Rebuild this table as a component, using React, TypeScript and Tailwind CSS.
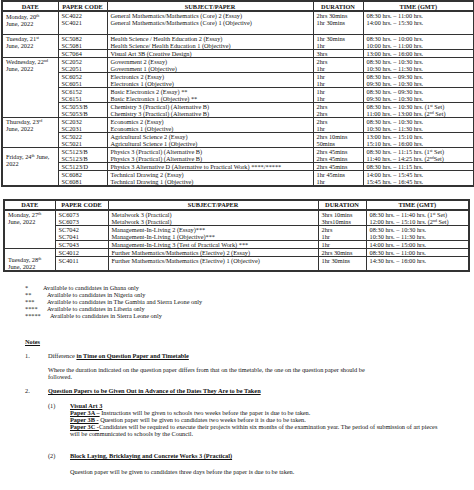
import React from 'react';

type Row = {
  date?: { lines: React.ReactNode[]; span: number; cls?: string };
  h: string;
  code: string[];
  subject: React.ReactNode[];
  dur: string[];
  time: React.ReactNode[];
};

const Sup = ({ children }: { children: React.ReactNode }) => (
  <span className="relative -top-[2px] text-[4px] leading-[0]">{children}</span>
);

const Lines = ({ items }: { items: React.ReactNode[] }) => (
  <>
    {items.map((l, i) => (
      <div key={i} className="h-[7px] whitespace-nowrap">
        {l}
      </div>
    ))}
  </>
);

const td = 'border border-[#333] align-top p-0 px-[3px]';

const firstTable: Row[] = [
  {
    date: { lines: [<>Monday, 20<Sup>th</Sup></>, 'June, 2022'], span: 1, cls: 'pt-[1px]' },
    h: 'h-[23px]',
    code: ['SC4022', 'SC4021'],
    subject: ['General Mathematics/Mathematics (Core) 2 (Essay)', 'General Mathematics/Mathematics (Core) 1 (Objective)'],
    dur: ['2hrs 30mins', '1hr 30mins'],
    time: ['08:30 hrs. – 11:00 hrs.', '14:00 hrs. – 15:30 hrs.'],
  },
  {
    date: { lines: [<>Tuesday, 21<Sup>st</Sup></>, 'June, 2022'], span: 2 },
    h: 'h-[15px]',
    code: ['SC5082', 'SC5081'],
    subject: ['Health Science / Health Education 2  (Essay)', 'Health Science/ Health Education 1 (Objective)'],
    dur: ['1hr 30mins', '1hr'],
    time: ['08:30 hrs. – 10:00 hrs.', '10:00 hrs. – 11:00 hrs.'],
  },
  {
    h: 'h-[7px]',
    code: ['SC7064'],
    subject: ['Visual Art 3B (Creative Design)'],
    dur: ['3hrs'],
    time: ['13:00 hrs. – 16:00 hrs.'],
  },
  {
    date: { lines: [<>Wednesday, 22<Sup>nd</Sup></>, 'June, 2022'], span: 4 },
    h: 'h-[14px]',
    code: ['SC2052', 'SC2051'],
    subject: ['Government 2 (Essay)', 'Government 1 (Objective)'],
    dur: ['2hrs', '1hr'],
    time: ['08:30 hrs. – 10:30 hrs.', '10:30 hrs. – 11:30 hrs.'],
  },
  {
    h: 'h-[15px]',
    code: ['SC6052', 'SC6051'],
    subject: ['Electronics 2 (Essay)', 'Electronics 1 (Objective)'],
    dur: ['1hr', '1hr'],
    time: ['08:30 hrs. – 09:30 hrs.', '09:30 hrs. – 10:30 hrs.'],
  },
  {
    h: 'h-[15px]',
    code: ['SC6152', 'SC6151'],
    subject: ['Basic Electronics 2 (Essay) **', 'Basic Electronics 1 (Objective) **'],
    dur: ['1hr', '1hr'],
    time: ['08:30 hrs. – 09:30 hrs.', '09:30 hrs. – 10:30 hrs.'],
  },
  {
    h: 'h-[14px]',
    code: ['SC5053/B', 'SC5053/B'],
    subject: ['Chemistry 3 (Practical) (Alternative B)', 'Chemistry 3 (Practical) (Alternative B)'],
    dur: ['2hrs', '2hrs'],
    time: [
      <>08:30 hrs. – 10:30 hrs. (1<Sup>st</Sup> Set)</>,
      <>11:00 hrs. – 13:00 hrs. (2<Sup>nd</Sup> Set)</>,
    ],
  },
  {
    date: { lines: [<>Thursday, 23<Sup>rd</Sup></>, 'June, 2022'], span: 2 },
    h: 'h-[15px]',
    code: ['SC2032', 'SC2031'],
    subject: ['Economics 2 (Essay)', 'Economics 1 (Objective)'],
    dur: ['2hrs', '1hr'],
    time: ['08:30 hrs. – 10:30 hrs.', '10:30 hrs. – 11:30 hrs.'],
  },
  {
    h: 'h-[15px]',
    code: ['SC5022', 'SC5021'],
    subject: ['Agricultural Science 2 (Essay)', 'Agricultural Science 1 (Objective)'],
    dur: ['2hrs 10mins', '50mins'],
    time: ['13:00 hrs. – 15:10 hrs.', '15:10 hrs. – 16:00 hrs.'],
  },
  {
    date: { lines: [<>Friday, 24<Sup>th</Sup> June,</>, '2022'], span: 3, cls: 'pt-[5px]' },
    h: 'h-[15px]',
    code: ['SC5123/B', 'SC5123/B'],
    subject: ['Physics 3 (Practical) (Alternative B)', 'Physics 3 (Practical) (Alternative B)'],
    dur: ['2hrs 45mins', '2hrs 45mins'],
    time: [
      <>08:30 hrs. – 11:15 hrs. (1<Sup>st</Sup> Set)</>,
      <>11:40 hrs. – 14:25 hrs. (2<Sup>nd</Sup>Set)</>,
    ],
  },
  {
    h: 'h-[7px]',
    code: ['SC5123/D'],
    subject: ['Physics 3 Alternative D (Alternative to Practical Work) ****/*****'],
    dur: ['2hrs 45mins'],
    time: ['08:30 hrs. – 11:15 hrs.'],
  },
  {
    h: 'h-[14px]',
    code: ['SC6082', 'SC6081'],
    subject: ['Technical Drawing 2 (Essay)', 'Technical Drawing 1 (Objective)'],
    dur: ['1hr 45mins', '1hr'],
    time: ['14:00 hrs. – 15:45 hrs.', '15:45 hrs. – 16:45 hrs.'],
  },
];

const secondTable: Row[] = [
  {
    date: { lines: [<>Monday, 27<Sup>th</Sup></>, 'June, 2022'], span: 3 },
    h: 'h-[14px]',
    code: ['SC6073', 'SC6073'],
    subject: ['Metalwork 3 (Practical)', 'Metalwork 3 (Practical)'],
    dur: ['3hrs 10mins', '3hrs10mins'],
    time: [
      <>08:30 hrs. – 11:40 hrs. (1<Sup>st</Sup> Set)</>,
      <>12:00 hrs. – 15:10 hrs. (2<Sup>nd</Sup> Set)</>,
    ],
  },
  {
    h: 'h-[14px]',
    code: ['SC7042', 'SC7041'],
    subject: ['Management-In-Living 2 (Essay)***', 'Management-In-Living 1 (Objective)***'],
    dur: ['2hrs', '1hr'],
    time: ['08:30 hrs. – 10:30 hrs.', '10:30 hrs. – 11:30 hrs.'],
  },
  {
    h: 'h-[7px]',
    code: ['SC7043'],
    subject: ['Management-In-Living 3 (Test of Practical Work) ***'],
    dur: ['1hr'],
    time: ['14:00 hrs. – 15:00 hrs.'],
  },
  {
    date: { lines: [<>Tuesday, 28<Sup>th</Sup></>, 'June, 2022'], span: 2, cls: '!align-bottom' },
    h: 'h-[7px]',
    code: ['SC4012'],
    subject: ['Further Mathematics/Mathematics (Elective) 2 (Essay)'],
    dur: ['2hrs 30mins'],
    time: ['08:30 hrs. – 11:00 hrs.'],
  },
  {
    h: 'h-[15px]',
    code: ['SC4011'],
    subject: ['Further Mathematics/Mathematics (Elective) 1 (Objective)'],
    dur: ['1hr 30mins'],
    time: ['14:30 hrs. – 16:00 hrs.'],
  },
];

const th = 'border border-[#333] border-b-2 text-center p-0';

const Header = () => (
  <tr className="h-[10px] font-bold">
    <th className={th}>DATE</th>
    <th className={th}>PAPER CODE</th>
    <th className={th}>SUBJECT/PAPER</th>
    <th className={th}>DURATION</th>
    <th className={th}>TIME (GMT)</th>
  </tr>
);

const Timetable = ({ rows, widths, cls }: { rows: Row[]; widths: string[]; cls: string }) => (
  <table className={`table-fixed border-collapse border-2 border-[#333] ${cls}`}>
    <colgroup>
      {widths.map((w, i) => (
        <col key={i} className={w} />
      ))}
    </colgroup>
    <tbody>
      <Header />
      {rows.map((r, i) => (
        <tr key={i} className={r.h}>
          {r.date && (
            <td rowSpan={r.date.span} className={`${td} ${r.date.cls ?? ''}`}>
              <Lines items={r.date.lines} />
            </td>
          )}
          <td className={td}>
            <Lines items={r.code} />
          </td>
          <td className={td}>
            <Lines items={r.subject} />
          </td>
          <td className={td}>
            <Lines items={r.dur} />
          </td>
          <td className={td}>
            <Lines items={r.time} />
          </td>
        </tr>
      ))}
    </tbody>
  </table>
);

const U = ({ children }: { children: React.ReactNode }) => (
  <span className="font-bold underline decoration-[0.7px] underline-offset-[1px]">{children}</span>
);

export default function App() {
  return (
    <div className="w-[474px] h-[490px] overflow-hidden bg-white text-[#111] font-['Liberation_Serif',serif] text-[6.3px] leading-[7px]">
      <Timetable
        rows={firstTable}
        widths={['w-[56px]', 'w-[49px]', 'w-[206px]', 'w-[50px]', 'w-[111px]']}
        cls="ml-[1px] w-[472px]"
      />

      <Timetable
        rows={secondTable}
        widths={['w-[51px]', 'w-[53px]', 'w-[210px]', 'w-[48px]', 'w-[103px]']}
        cls="ml-[3px] mt-[12px] w-[465px]"
      />

      {/* footnotes */}
      <div className="mt-[12px] pl-[25px]">
        <div className="flex"><span className="w-[18px]">*</span><span>Available to candidates in Ghana only</span></div>
        <div className="flex"><span className="w-[22px]">**</span><span>Available to candidates in Nigeria only</span></div>
        <div className="flex"><span className="w-[22px]">***</span><span>Available to candidates in The Gambia and Sierra Leone only</span></div>
        <div className="flex"><span className="w-[22px]">****</span><span>Available to candidates in Liberia only</span></div>
        <div className="flex"><span className="w-[25px]">*****</span><span>Available to candidates in Sierra Leone only</span></div>
      </div>

      {/* notes */}
      <div className="mt-[19px] pl-[25px]">
        <U>Notes</U>
      </div>

      <div className="mt-[7px] flex pl-[25px]">
        <span className="w-[23px]">1.</span>
        <span>
          Difference <U>in Time on Question Paper and Timetable</U>
        </span>
      </div>
      <p className="mt-[7px] pl-[48px]">
        Where the duration indicated on the question paper differs from that on the timetable, the one on the question paper should be
        <br />
        followed.
      </p>

      <div className="mt-[7px] flex pl-[25px]">
        <span className="w-[23px]">2.</span>
        <U>Question Papers to be Given Out in Advance of the Dates They Are to be Taken</U>
      </div>

      <div className="mt-[8px] flex pl-[48px]">
        <span className="w-[22px] shrink-0">(1)</span>
        <div>
          <U>Visual Art 3</U>
          <div>
            <U>Paper 3A –</U> Instructions will be given to schools two weeks before the paper is due to be taken.
          </div>
          <div>
            <U>Paper 3B -</U> Question paper will be given to candidates two weeks before it is due to be taken.
          </div>
          <div>
            <U>Paper 3C -</U>Candidates will be required to execute their projects within six months of the examination year. The period of submission of art pieces
            <br />
            will be communicated to schools by the Council.
          </div>
        </div>
      </div>

      <div className="mt-[15px] flex pl-[48px]">
        <span className="w-[22px] shrink-0">(2)</span>
        <U>Block Laying, Bricklaying and Concrete Works 3 (Practical)</U>
      </div>
      <p className="mt-[9px] pl-[70px]">Question paper will be given to candidates three days before the paper is due to be taken.</p>
    </div>
  );
}
